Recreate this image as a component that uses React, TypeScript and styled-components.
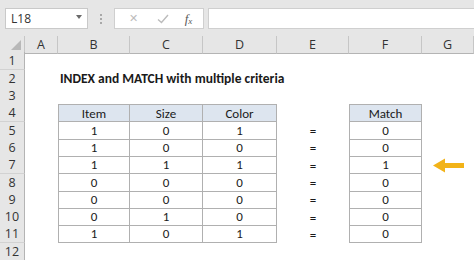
import styled, { createGlobalStyle } from "styled-components";

const GlobalStyle = createGlobalStyle`
  html, body {
    margin: 0;
    padding: 0;
    background: #ffffff;
    overflow: hidden;
  }
  * {
    box-sizing: border-box;
  }
`;

const columns = ["A", "B", "C", "D", "E", "F", "G"];

const data = [
  [1, 0, 1, 0],
  [1, 0, 0, 0],
  [1, 1, 1, 1],
  [0, 0, 0, 0],
  [0, 0, 0, 0],
  [0, 1, 0, 0],
  [1, 0, 1, 0],
];

export default function App() {
  return <Page>
    <GlobalStyle/>
    <FormulaBar>
      <NameBox>
        <span>L18</span>
        <Caret/>
      </NameBox>
      <Grip>
        <Dot/><Dot/><Dot/>
      </Grip>
      <FxButtons>
        <FxIcon $muted>✕</FxIcon>
        <FxIcon $muted>
          <svg width="12" height="10" viewBox="0 0 12 10">
            <path d="M1 5.5 L4.5 8.5 L11 1" fill="none" stroke="#bcbcbc" strokeWidth="1.4"/>
          </svg>
        </FxIcon>
        <FxLabel>f<sub>x</sub></FxLabel>
      </FxButtons>
      <FormulaInput/>
    </FormulaBar>

    <Sheet>
      <Row $h={16}>
        <Corner>
          <svg width="10" height="10" viewBox="0 0 10 10">
            <polygon points="10,0 10,10 0,10" fill="#b8b8b8"/>
          </svg>
        </Corner>
        {columns.map(c => <ColHead key={c}>{c}</ColHead>)}
      </Row>

      <Row>
        <RowHead>1</RowHead>
      </Row>
      <Row>
        <RowHead>2</RowHead>
        <Blank/>
        <Title>INDEX and MATCH with multiple criteria</Title>
      </Row>
      <Row>
        <RowHead>3</RowHead>
      </Row>
      <Row>
        <RowHead>4</RowHead>
        <Blank/>
        <Cell $kind="head" $first $top>Item</Cell>
        <Cell $kind="head" $top>Size</Cell>
        <Cell $kind="head" $top>Color</Cell>
        <Blank/>
        <Cell $kind="head" $first $top>Match</Cell>
      </Row>
      {data.map((r, i) => <Row key={i}>
        <RowHead>{i + 5}</RowHead>
        <Blank/>
        <Cell $kind="data" $first>{r[0]}</Cell>
        <Cell $kind="data">{r[1]}</Cell>
        <Cell $kind="data">{r[2]}</Cell>
        <Cell>=</Cell>
        <Cell $kind="data" $first>{r[3]}</Cell>
        {i === 2 && <ArrowCell>
          <svg width="32" height="15" viewBox="0 0 32 15">
            <polygon points="0,7.5 12,0.5 12,5 31,5 31,10 12,10 12,14.5" fill="#f2b318"/>
          </svg>
        </ArrowCell>}
      </Row>)}
      <Row>
        <RowHead>12</RowHead>
      </Row>
    </Sheet>
  </Page>
}

const Page = styled.div`
  width: 474px;
  height: 260px;
  display: flex;
  flex-direction: column;
  background: #ffffff;
  overflow: hidden;
`;

const FormulaBar = styled.div`
  display: flex;
  align-items: flex-start;
  height: 38px;
  padding: 8px 0 0 5px;
  background: #e6e6e6;
`;

const NameBox = styled.div`
  display: flex;
  align-items: center;
  justify-content: space-between;
  width: 83px;
  height: 21px;
  padding: 0 5px 0 5px;
  background: #ffffff;
  border: 1px solid #c9c9c9;
  font-family: "Open Sans", "Noto Sans", sans-serif;
  font-size: 12px;
  color: #333333;
`;

const Caret = styled.div`
  width: 0;
  height: 0;
  margin-top: -3px;
  border-left: 3.5px solid transparent;
  border-right: 3.5px solid transparent;
  border-top: 4px solid #6a6a6a;
`;

const Grip = styled.div`
  display: flex;
  flex-direction: column;
  align-items: center;
  gap: 2px;
  width: 26px;
  padding-top: 6px;
`;

const Dot = styled.div`
  width: 2px;
  height: 2px;
  background: #a8a8a8;
`;

const FxButtons = styled.div`
  display: flex;
  align-items: center;
  justify-content: space-around;
  width: 90px;
  height: 21px;
  padding: 0 4px;
  background: #ffffff;
  border: 1px solid #cfcfcf;
`;

const FxIcon = styled.span<{ $muted?: boolean }>`
  display: flex;
  align-items: center;
  justify-content: center;
  width: 16px;
  font-family: "DejaVu Sans", sans-serif;
  font-size: 11px;
  color: ${p => p.$muted ? "#bcbcbc" : "#555555"};
`;

const FxLabel = styled.span`
  font-family: "Liberation Serif", serif;
  font-style: italic;
  font-size: 13px;
  color: #5a5a5a;

  sub {
    font-size: 9px;
    vertical-align: -1px;
  }
`;

const FormulaInput = styled.div`
  flex: 1;
  height: 21px;
  margin-left: 4px;
  background: #ffffff;
  border-top: 1px solid #cfcfcf;
  border-bottom: 1px solid #cfcfcf;
  border-left: 1px solid #cfcfcf;
`;

const Sheet = styled.div`
  display: flex;
  flex-direction: column;
`;

const Row = styled.div<{ $h?: number }>`
  display: grid;
  grid-template-columns: 25px 33px 72px 73px 74px 72px 73px 1fr;
  height: ${p => p.$h ?? 17.3}px;
`;

const Corner = styled.div`
  display: flex;
  align-items: flex-end;
  justify-content: flex-end;
  padding: 0 3px 3px 0;
  background: #e6e6e6;
  border-right: 1px solid #c6c6c6;
  border-bottom: 1px solid #b4b4b4;
`;

const ColHead = styled.div`
  display: flex;
  align-items: center;
  justify-content: center;
  background: #e6e6e6;
  border-right: 1px solid #c6c6c6;
  border-bottom: 1px solid #b4b4b4;
  font-family: "Open Sans", "Noto Sans", sans-serif;
  font-size: 12.5px;
  color: #333333;
`;

const RowHead = styled.div`
  display: flex;
  align-items: center;
  justify-content: center;
  background: #e6e6e6;
  border-right: 1px solid #b4b4b4;
  border-bottom: 1px solid #d2d2d2;
  font-family: "Open Sans", "Noto Sans", sans-serif;
  font-size: 12.5px;
  color: #333333;
`;

const Blank = styled.div``;

const Title = styled.div`
  grid-column: span 5;
  display: flex;
  align-items: center;
  padding-left: 2px;
  font-family: "Carlito", Lato, sans-serif;
  font-weight: 700;
  font-size: 13.5px;
  color: #1a1a1a;
  white-space: nowrap;
`;

const Cell = styled.div<{ $kind?: "head" | "data"; $first?: boolean; $top?: boolean }>`
  display: flex;
  align-items: center;
  justify-content: center;
  background: ${p => p.$kind === "head" ? "#dde5ef" : "transparent"};
  border-right: ${p => p.$kind ? "1px solid #b0b0b0" : "none"};
  border-bottom: ${p => p.$kind ? "1px solid #b0b0b0" : "none"};
  border-left: ${p => p.$first ? "1px solid #b0b0b0" : "none"};
  border-top: ${p => p.$top ? "1px solid #b0b0b0" : "none"};
  font-family: "Carlito", Lato, sans-serif;
  font-size: 13px;
  color: #1a1a1a;
`;

const ArrowCell = styled.div`
  display: flex;
  align-items: center;
  padding-left: 11px;
`;
